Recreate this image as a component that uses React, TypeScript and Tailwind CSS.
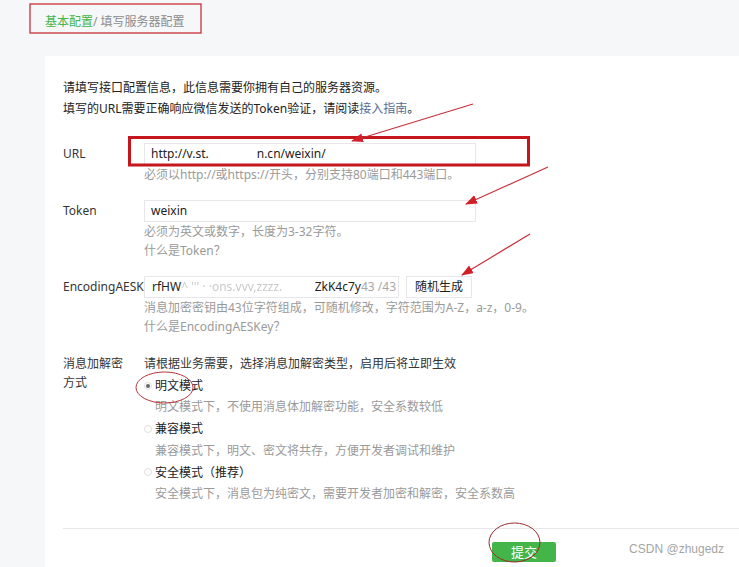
import React from 'react';

const font = "font-['Noto_Sans','Noto_Sans_CJK_SC',sans-serif]";

function Annotations() {
  return (
    <svg className="absolute inset-0 pointer-events-none" width="739" height="567" viewBox="0 0 739 567">
      <defs>
        <marker id="head" markerUnits="userSpaceOnUse" markerWidth="12" markerHeight="10" refX="11" refY="4.5" orient="auto">
          <path d="M0,0 L12,4.5 L0,9 z" fill="#d0202a" />
        </marker>
      </defs>
      <rect x="30" y="4" width="171" height="29" fill="none" stroke="#c8323a" strokeWidth="1.3" />
      <rect x="129.5" y="137.5" width="399" height="27.5" fill="none" stroke="#c4161c" strokeWidth="3" />
      <line x1="473" y1="104" x2="352" y2="141" stroke="#c8303a" strokeWidth="1.2" markerEnd="url(#head)" />
      <line x1="548" y1="167" x2="466" y2="204" stroke="#c8303a" strokeWidth="1.2" markerEnd="url(#head)" />
      <line x1="530" y1="234" x2="462" y2="275" stroke="#c8303a" strokeWidth="1.2" markerEnd="url(#head)" />
      <ellipse cx="164.5" cy="387.5" rx="28.5" ry="15.5" fill="none" stroke="#b8323a" strokeWidth="1" />
      <ellipse cx="514.5" cy="542.5" rx="25.5" ry="19.5" fill="none" stroke="#9a2a2a" strokeWidth="1" />
    </svg>
  );
}

function Radio({ checked }: { checked?: boolean }) {
  return (
    <span className="inline-flex size-[8px] items-center justify-center rounded-full border border-[#e0e0e0] bg-white">
      {checked && <span className="size-[4px] rounded-full bg-[#666]" />}
    </span>
  );
}

export default function App() {
  const modes = [
    { name: '明文模式', desc: '明文模式下，不使用消息体加解密功能，安全系数较低', checked: true },
    { name: '兼容模式', desc: '兼容模式下，明文、密文将共存，方便开发者调试和维护' },
    { name: '安全模式（推荐）', desc: '安全模式下，消息包为纯密文，需要开发者加密和解密，安全系数高' },
  ];

  return (
    <div className={`relative w-[739px] h-[567px] overflow-hidden bg-[#f6f7f9] text-[12px] ${font}`}>
      <div className="h-[56px] pl-[45px] pt-[13px] leading-[18px]">
        <span className="text-[#44b549]">基本配置</span>
        <span className="text-[#8d8d8d]">/ 填写服务器配置</span>
      </div>

      <div className="ml-[45px] h-[511px] bg-white pl-[18px] pt-[21px]">
        <div className="leading-[21px] text-[#222]">
          <p>请填写接口配置信息，此信息需要你拥有自己的服务器资源。</p>
          <p>
            填写的URL需要正确响应微信发送的Token验证，请阅读<span className="text-[#576b95]">接入指南</span>。
          </p>
        </div>

        <div className="mt-[24px] flex">
          <div className="w-[81px] shrink-0 leading-[22px] text-[#353535]">URL</div>
          <div>
            <div className="flex h-[22px] w-[332px] items-center border border-[#e7e7eb] pl-[6px] text-[#222]">
              http://v.st.<span className="inline-block w-[48px]" />n.cn/weixin/
            </div>
            <p className="leading-[19px] text-[#9a9a9a]">必须以http://或https://开头，分别支持80端口和443端口。</p>
          </div>
        </div>

        <div className="mt-[16px] flex">
          <div className="w-[81px] shrink-0 leading-[22px] text-[#353535]">Token</div>
          <div>
            <div className="flex h-[22px] w-[332px] items-center border border-[#e7e7eb] pl-[6px] text-[#222]">weixin</div>
            <p className="leading-[19px] text-[#9a9a9a]">必须为英文或数字，长度为3-32字符。</p>
            <p className="leading-[19px] text-[#9a9a9a]">什么是Token？</p>
          </div>
        </div>

        <div className="mt-[16px] flex">
          <div className="w-[81px] shrink-0 overflow-hidden whitespace-nowrap leading-[22px] text-[#353535]">EncodingAESKey</div>
          <div>
            <div className="flex items-center gap-[7px]">
              <div className="flex h-[22px] w-[255px] items-center border border-[#e7e7eb] pl-[7px] pr-[2px] text-[#222] whitespace-nowrap">
                <span>rfHW</span>
                <span className="flex-1 overflow-hidden text-[#c9c9c9] blur-[0.6px]">^ ''' · ·ons.vvv,zzzz.</span>
                <span>ZkK4c7y</span>
                <span className="text-[#a8a8a8]">43 /43</span>
              </div>
              <button className="h-[22px] w-[66px] border border-[#e7e7eb] bg-white text-[#222]">随机生成</button>
            </div>
            <p className="leading-[19px] text-[#9a9a9a]">消息加密密钥由43位字符组成，可随机修改，字符范围为A-Z，a-z，0-9。</p>
            <p className="leading-[19px] text-[#9a9a9a]">什么是EncodingAESKey？</p>
          </div>
        </div>

        <div className="mt-[17px] flex">
          <div className="w-[81px] shrink-0 pt-[1px] leading-[19px] text-[#353535]">
            消息加解密
            <br />
            方式
          </div>
          <div className="leading-[21.7px]">
            <p className="text-[#353535]">请根据业务需要，选择消息加解密类型，启用后将立即生效</p>
            {modes.map(m => (
              <div key={m.name}>
                <div className="flex items-center">
                  <span className="flex w-[11px] items-center">
                    <Radio checked={m.checked} />
                  </span>
                  <span className="text-[#222]">{m.name}</span>
                </div>
                <p className="pl-[11px] text-[#9a9a9a]">{m.desc}</p>
              </div>
            ))}
          </div>
        </div>

        <div className="mt-[23px] border-t border-[#e7e7eb] pt-[13px]">
          <button className="ml-[429px] h-[20px] w-[64px] rounded-[2px] bg-[#44b549] text-[13px] leading-[20px] text-white">
            提交
          </button>
        </div>
      </div>

      <div className="absolute right-[15px] bottom-[9px] font-['Liberation_Sans',sans-serif] text-[12px] text-[#a5a5a5]">
        CSDN @zhugedz
      </div>

      <Annotations />
    </div>
  );
}
